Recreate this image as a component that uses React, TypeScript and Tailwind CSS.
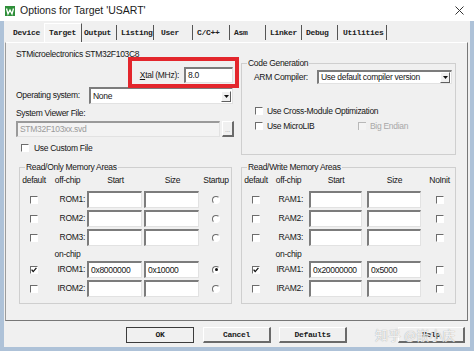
import React from "react";

const field =
  "border-t-2 border-l-2 border-r border-b border-t-[#7c7c7c] border-l-[#7c7c7c] border-r-[#e2e2e2] border-b-[#e2e2e2] bg-white";
const raised =
  "border-t border-l border-r-2 border-b-2 border-t-white border-l-white border-r-[#6a6a6a] border-b-[#6a6a6a] bg-[#f0f0f0]";
const mono = "font-['Liberation_Mono',monospace] font-bold text-[8px] tracking-[-0.3px]";

function Check({ on = false, off = false }: { on?: boolean; off?: boolean }) {
  return (
    <span
      className={
        off
          ? "relative inline-flex h-[8px] w-[8px] shrink-0 border-t-[1.5px] border-l-[1.5px] border-t-[#b8b8b8] border-l-[#b8b8b8] bg-[#f4f4f4]"
          : "relative inline-flex h-[8px] w-[8px] shrink-0 border-t-[1.5px] border-l-[1.5px] border-r border-b border-t-[#6c6c6c] border-l-[#6c6c6c] border-r-white border-b-white bg-white"
      }
    >
      {on && (
        <svg className="absolute left-0 top-0" width="6" height="6" viewBox="0 0 6 6">
          <path d="M0.6 2.6 L2.2 4.6 L5.4 0.9" stroke="#111" strokeWidth="1.3" fill="none" />
        </svg>
      )}
    </span>
  );
}

function Radio({ on = false }: { on?: boolean }) {
  return (
    <span className="inline-flex h-[8px] w-[8px] items-center justify-center rounded-full border-t border-l border-r border-b border-t-[#6c6c6c] border-l-[#6c6c6c] border-r-white border-b-white bg-white">
      {on && <span className="h-[3px] w-[3px] rounded-full bg-[#111]" />}
    </span>
  );
}

function Arrow() {
  return (
    <span className="flex h-[11px] w-[10px] shrink-0 items-center justify-center border border-t-white border-l-white border-r-[#5f5f5f] border-b-[#5f5f5f] bg-[#f0f0f0]">
      <svg width="5" height="3" viewBox="0 0 5 3">
        <path d="M0 0 H5 L2.5 3 Z" fill="#111" />
      </svg>
    </span>
  );
}

function Group({ title, className, children }: { title: string; className: string; children: React.ReactNode }) {
  return (
    <div className={`flex flex-col border border-[#cfcfcf] ${className}`}>
      <div className="-mt-[6px] ml-[5px] w-fit bg-[#f0f0f0] px-[1px] leading-[10px]">{title}</div>
      {children}
    </div>
  );
}

const romRows = [
  { n: "ROM1:", s: "", z: "", d: false, r: false },
  { n: "ROM2:", s: "", z: "", d: false, r: false },
  { n: "ROM3:", s: "", z: "", d: false, r: false },
  { n: "IROM1:", s: "0x8000000", z: "0x10000", d: true, r: true },
  { n: "IROM2:", s: "", z: "", d: false, r: false },
];
const ramRows = [
  { n: "RAM1:", s: "", z: "", d: false },
  { n: "RAM2:", s: "", z: "", d: false },
  { n: "RAM3:", s: "", z: "", d: false },
  { n: "IRAM1:", s: "0x20000000", z: "0x5000", d: true },
  { n: "IRAM2:", s: "", z: "", d: false },
];

const tabs = [
  { t: "Device", w: "w-[37px] pl-[6px]" },
  { t: "Target", w: "w-[38px] pl-[4px]" },
  { t: "Output", w: "w-[35px] pl-[2px]" },
  { t: "Listing", w: "w-[37px] pl-[4px]" },
  { t: "User", w: "w-[39px] pl-[7px]" },
  { t: "C/C++", w: "w-[37px] pl-[4px]" },
  { t: "Asm", w: "w-[36px] pl-[4px]" },
  { t: "Linker", w: "w-[36px] pl-[4px]" },
  { t: "Debug", w: "w-[36px] pl-[4px]" },
  { t: "Utilities", w: "w-[49px] pl-[5px]" },
];

export default function App() {
  return (
    <div className="flex h-[351px] w-[474px] flex-col overflow-hidden bg-[#aec2d8] font-['Liberation_Sans',Arial,sans-serif] text-[8.5px] tracking-[-0.3px] text-[#161616]">
      {/* title bar */}
      <div className="flex h-[21px] shrink-0 items-center bg-white pl-[5px] tracking-normal">
        <svg width="10" height="10" viewBox="0 0 10 10">
          <rect width="10" height="10" fill="#2f8f3a" />
          <path d="M1.5 2.5 L3 8 L5 4 L7 8 L8.5 2.5" stroke="#fff" strokeWidth="1.3" fill="none" />
        </svg>
        <span className="ml-[5px] text-[10.5px] text-[#1b1b1b]">Options for Target 'USART'</span>
        <svg className="ml-auto mr-[10px]" width="9" height="9" viewBox="0 0 9 9">
          <path d="M0.5 0.5 L8.5 8.5 M8.5 0.5 L0.5 8.5" stroke="#333" strokeWidth="1" />
        </svg>
      </div>

      <div className="mx-[4px] mb-[4px] flex flex-1 flex-col bg-[#f0f0f0]">
        {/* tabs */}
        <div className={`flex h-[21px] shrink-0 items-end pl-[3px] text-[#222] ${mono}`}>
          {tabs.map((tab) =>
            tab.t === "Target" ? (
              <div
                key={tab.t}
                className={`flex h-[19px] items-center border-t border-l border-r border-t-white border-l-white border-r-[#555] bg-[#f4f4f4] ${tab.w}`}
              >
                {tab.t}
              </div>
            ) : (
              <div
                key={tab.t}
                className={`mb-[2px] flex h-[15px] items-center ${tab.t === "Device" ? "" : "border-r border-r-[#555]"} ${tab.w}`}
              >
                {tab.t}
              </div>
            )
          )}
        </div>

        {/* panel */}
        <div className="ml-[1px] flex h-[279px] w-[463px] shrink-0 flex-col border border-t-white border-l-[#9c9c9c] border-r-[#777] border-b-[#777] pl-[10px] pt-[6px]">
          <div className="leading-[10px]">STMicroelectronics STM32F103C8</div>

          <div className="flex">
            <div className="flex w-[218px] flex-col">
              <div className="relative mt-[8px] flex h-[16px] items-center justify-end pr-[1px]">
                <span>
                  <span className="underline">X</span>tal (MHz):
                </span>
                <div className={`ml-[5px] flex h-[16px] w-[49px] items-center pl-[2px] ${field}`}>8.0</div>
                <div className="absolute -top-[10px] left-[112px] h-[31px] w-[111px] border-4 border-[#e3262c]" />
              </div>

              <div className="mt-[4px] flex h-[17px] items-center">
                <span className="w-[73px]">Operating system:</span>
                <div className={`flex h-[17px] w-[144px] items-center justify-between pl-[2px] pr-[1px] ${field}`}>
                  <span>None</span>
                  <Arrow />
                </div>
              </div>

              <div className="mt-[4px] leading-[10px]">System Viewer File:</div>

              <div className="mt-[3px] flex h-[16px] gap-[2px]">
                <div className="flex w-[204px] items-center border-t-2 border-l-2 border-r border-b border-t-[#9a9a9a] border-l-[#9a9a9a] border-r-[#e2e2e2] border-b-[#e2e2e2] bg-[#f3f3f3] pl-[2px] text-[#9a9a9a]">
                  STM32F103xx.svd
                </div>
                <div className={`flex w-[12px] items-end justify-center pb-[2px] text-[7px] leading-[6px] text-[#aaa] ${raised}`}>...</div>
              </div>

              <div className="mt-[6px] flex h-[10px] items-center gap-[5px] pl-[5px]">
                <Check />
                <span>Use Custom File</span>
              </div>
            </div>

            <Group title="Code Generation" className="ml-[7px] mt-[4px] h-[92px] w-[215px]">
              <div className="mt-[2px] flex h-[14px] items-center pl-[12px]">
                <span className="w-[63px]">ARM Compiler:</span>
                <div className={`flex h-[14px] w-[135px] items-center justify-between pl-[2px] pr-[1px] ${field}`}>
                  <span>Use default compiler version</span>
                  <Arrow />
                </div>
              </div>
              <div className="mt-[22px] flex h-[10px] items-center gap-[4px] pl-[13px]">
                <Check />
                <span>Use Cross-Module Optimization</span>
              </div>
              <div className="mt-[5px] flex h-[10px] items-center pl-[13px]">
                <div className="flex w-[103px] items-center gap-[4px]">
                  <Check />
                  <span>Use MicroLIB</span>
                </div>
                <div className="flex items-center gap-[4px] text-[#a8a8a8]">
                  <Check off />
                  <span>Big Endian</span>
                </div>
              </div>
            </Group>
          </div>

          <div className="mt-[12px] flex">
            <Group title="Read/Only Memory Areas" className="ml-[3px] h-[137px] w-[213px]">
              <div className="mt-[2px] grid h-[12px] grid-cols-[28px_39px_57px_57px_30px] items-center text-center">
                <span>default</span>
                <span>off-chip</span>
                <span>Start</span>
                <span>Size</span>
                <span>Startup</span>
              </div>
              {romRows.map((r, i) => (
                <React.Fragment key={r.n}>
                  {i === 3 && (
                    <div className="mt-[2px] grid h-[12px] grid-cols-[28px_39px] items-center">
                      <span />
                      <span className="text-center">on-chip</span>
                    </div>
                  )}
                  <div
                    className={`grid h-[17px] grid-cols-[28px_39px_57px_57px_30px] items-center ${
                      i === 0 ? "mt-[5px]" : i === 3 ? "mt-[1px]" : "mt-[2px]"
                    }`}
                  >
                    <span className="flex justify-center">
                      <Check on={r.d} />
                    </span>
                    <span className="pr-[2px] text-right">{r.n}</span>
                    <div className={`flex h-[17px] w-[55px] items-start pl-[2px] pt-[1px] ${field}`}>{r.s}</div>
                    <div className={`flex h-[17px] w-[55px] items-start pl-[2px] pt-[1px] ${field}`}>{r.z}</div>
                    <span className="flex justify-center">
                      <Radio on={r.r} />
                    </span>
                  </div>
                </React.Fragment>
              ))}
            </Group>

            <Group title="Read/Write Memory Areas" className="ml-[9px] h-[137px] w-[215px]">
              <div className="mt-[2px] grid h-[12px] grid-cols-[28px_37px_58px_59px_31px] items-center text-center">
                <span>default</span>
                <span>off-chip</span>
                <span>Start</span>
                <span>Size</span>
                <span>NoInit</span>
              </div>
              {ramRows.map((r, i) => (
                <React.Fragment key={r.n}>
                  {i === 3 && (
                    <div className="mt-[2px] grid h-[12px] grid-cols-[28px_37px] items-center">
                      <span />
                      <span className="text-center">on-chip</span>
                    </div>
                  )}
                  <div
                    className={`grid h-[17px] grid-cols-[28px_37px_58px_59px_31px] items-center ${
                      i === 0 ? "mt-[5px]" : i === 3 ? "mt-[1px]" : "mt-[2px]"
                    }`}
                  >
                    <span className="flex justify-center">
                      <Check on={r.d} />
                    </span>
                    <span className="pr-[4px] text-right">{r.n}</span>
                    <div className={`ml-[2px] flex h-[17px] w-[53px] items-start pl-[2px] pt-[1px] ${field}`}>{r.s}</div>
                    <div className={`ml-[2px] flex h-[17px] w-[54px] items-start pl-[2px] pt-[1px] ${field}`}>{r.z}</div>
                    <span className="flex justify-center">
                      <Check />
                    </span>
                  </div>
                </React.Fragment>
              ))}
            </Group>
          </div>
        </div>

        {/* buttons */}
        <div className={`relative mt-[6px] flex h-[16px] pl-[122px] text-[#1a1a1a] ${mono}`}>
          <button className="flex h-[16px] w-[68px] items-center justify-center border border-[#3c3c3c] bg-[#f0f0f0]">
            OK
          </button>
          <button className={`ml-[9px] flex h-[16px] w-[68px] items-center justify-center ${raised}`}>Cancel</button>
          <button className={`ml-[8px] flex h-[16px] w-[68px] items-center justify-center ${raised}`}>Defaults</button>
          <button className={`ml-[51px] flex h-[16px] w-[67px] items-center justify-center ${raised}`}>Help</button>
          <span className="absolute -top-[2px] left-[371px] font-['Noto_Sans_CJK_SC',sans-serif] text-[13px] font-normal tracking-normal text-white/85 [text-shadow:0_0_1px_#8a8a8a]">
            知乎 @嵌小庆
          </span>
        </div>
      </div>
    </div>
  );
}
